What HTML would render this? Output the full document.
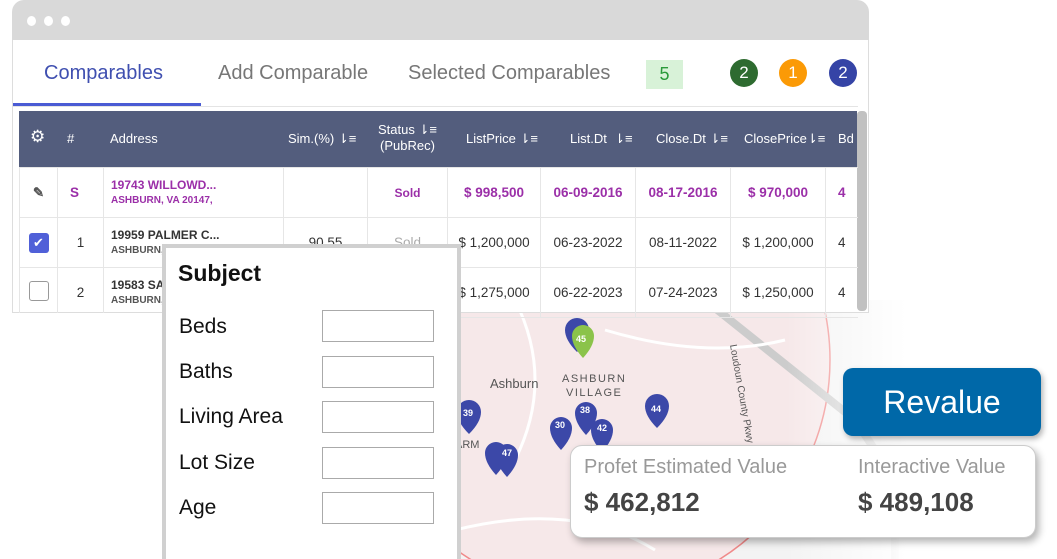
<!DOCTYPE html><html><head><style>
*{margin:0;padding:0;box-sizing:border-box}
body{width:1057px;height:559px;overflow:hidden;background:#fff;font-family:"Liberation Sans",sans-serif;position:relative}
.abs{position:absolute}
.top{left:12px;top:0;width:857px;height:42px;background:#d9d9d9;border-radius:12px 12px 0 0}
.dot{width:9px;height:10px;border-radius:50%;background:#fff;top:16px}
.win{left:12px;top:40px;width:857px;height:273px;background:#fff;border:1px solid #ddd;border-top:none}
.tab{top:62px;font-size:20px;color:#777}
.hdr{left:19px;top:111px;width:838px;height:56px;background:#535d7d}
.hd{color:#fff;font-size:13px;top:131px}
table{position:absolute;left:19px;top:167px;border-collapse:collapse;font-size:13.5px;color:#333}
td{border:1px solid #e6e6e6;height:50px;text-align:center;padding:0}
.p td{color:#9b2fa8;font-weight:bold}
.ad{text-align:left;padding-left:7px;font-weight:bold;font-size:12px;line-height:16px}
.ad small{display:block;font-size:10px;font-weight:bold;color:#555}
.p .ad small{color:#9b2fa8}
.circ{width:28px;height:28px;border-radius:50%;color:#fff;font-size:17px;text-align:center;line-height:28px;top:59px}
.lbl{font-size:21px;color:#111;left:179px}
.inp{left:322px;width:112px;height:32px;border:1px solid #aaa;background:#fff}
</style></head><body>
<svg class="abs" style="left:455px;top:300px" width="602" height="259">
<defs><linearGradient id="f" x1="0" x2="1"><stop offset="0.55" stop-color="#fff" stop-opacity="0"/><stop offset="0.75" stop-color="#fff" stop-opacity="1"/></linearGradient></defs>
<rect x="0" y="0" width="602" height="259" fill="#f3f3f3"/>
<circle cx="140" cy="60" r="235" fill="#f6e8e9" stroke="#f08a8a" stroke-width="1.5"/>
<path d="M250 0 L400 120 L440 180 L440 259" stroke="#ccc" stroke-width="8" fill="none"/>
<path d="M0 230 Q120 200 200 250 M60 0 Q100 80 60 160 M150 30 Q250 60 330 40" stroke="#fff" stroke-width="3" fill="none"/>
<rect x="0" y="0" width="602" height="259" fill="url(#f)"/>
<text x="35" y="88" font-size="13" fill="#555" font-family="Liberation Sans">Ashburn</text>
<text x="107" y="82" font-size="11" fill="#555" letter-spacing="1.5" font-family="Liberation Sans">ASHBURN</text>
<text x="111" y="96" font-size="11" fill="#555" letter-spacing="1.5" font-family="Liberation Sans">VILLAGE</text>
<text x="0" y="148" font-size="11" fill="#555" font-family="Liberation Sans">ARM</text>
<text x="275" y="45" font-size="10" fill="#555" transform="rotate(80 275 45)" font-family="Liberation Sans">Loudoun County Pkwy</text>
<g fill="#3c48a8" font-family="Liberation Sans" font-size="9" font-weight="bold">
<path d="M110 30 a12 12 0 1 1 24 0 q0 10 -12 22 q-12 -12 -12 -22z"/>
<path d="M117 36 a11 11 0 1 1 22 0 q0 10 -11 22 q-11 -12 -11 -22z" fill="#8bc34a"/>
<text x="121" y="42" fill="#fff">45</text>
<path d="M2 112 a12 12 0 1 1 24 0 q0 10 -12 22 q-12 -12 -12 -22z"/>
<text x="8" y="116" fill="#fff">39</text>
<path d="M95 128 a11 11 0 1 1 22 0 q0 10 -11 22 q-11 -12 -11 -22z"/><text x="100" y="128" fill="#fff">30</text>
<path d="M120 113 a11 11 0 1 1 22 0 q0 10 -11 22 q-11 -12 -11 -22z"/><text x="125" y="113" fill="#fff">38</text>
<path d="M136 130 a11 11 0 1 1 22 0 q0 10 -11 22 q-11 -12 -11 -22z"/><text x="142" y="131" fill="#fff">42</text>
<path d="M190 106 a12 12 0 1 1 24 0 q0 10 -12 22 q-12 -12 -12 -22z"/><text x="196" y="112" fill="#fff">44</text>
<path d="M30 153 a11 11 0 1 1 22 0 q0 10 -11 22 q-11 -12 -11 -22z"/>
<path d="M41 155 a11 11 0 1 1 22 0 q0 10 -11 22 q-11 -12 -11 -22z"/><text x="47" y="156" fill="#fff">47</text>
</g></svg>
<div class="abs top"></div>
<div class="abs dot" style="left:27px"></div><div class="abs dot" style="left:44px"></div><div class="abs dot" style="left:61px"></div>
<div class="abs win"></div>
<div class="abs tab" style="left:44px;color:#3f4fb0">Comparables</div>
<div class="abs" style="left:13px;top:103px;width:188px;height:3px;background:#4a5bd4"></div>
<div class="abs" style="left:13px;top:106px;width:845px;height:1px;background:#e4e4e4"></div>
<div class="abs tab" style="left:218px">Add Comparable</div>
<div class="abs tab" style="left:408px">Selected Comparables</div>
<div class="abs" style="left:646px;top:60px;width:37px;height:29px;background:#d8f2d8;color:#2a9a3a;font-size:18px;text-align:center;line-height:29px">5</div>
<div class="abs circ" style="left:730px;background:#2e6b30">2</div>
<div class="abs circ" style="left:779px;background:#fb9a06">1</div>
<div class="abs circ" style="left:829px;background:#3544a6">2</div>
<div class="abs hdr"></div>
<div class="abs" style="left:857px;top:111px;width:10px;height:200px;background:#c1c1c1;border-radius:4px"></div>
<div class="abs hd" style="left:30px;font-size:17px;top:127px">⚙</div>
<div class="abs hd" style="left:67px">#</div>
<div class="abs hd" style="left:110px">Address</div>
<div class="abs hd" style="left:288px">Sim.(%) ⇂≡</div>
<div class="abs hd" style="left:378px;top:122px;text-align:center;line-height:16px">Status ⇂≡<br>(PubRec)</div>
<div class="abs hd" style="left:466px">ListPrice ⇂≡</div>
<div class="abs hd" style="left:570px">List.Dt &nbsp;⇂≡</div>
<div class="abs hd" style="left:656px">Close.Dt ⇂≡</div>
<div class="abs hd" style="left:744px">ClosePrice⇂≡</div>
<div class="abs hd" style="left:838px">Bd</div>
<table>
<tr class="p"><td style="width:38px;color:#555">✎</td><td style="width:46px;text-align:left;padding-left:12px">S</td><td class="ad" style="width:180px">19743 WILLOWD...<small>ASHBURN, VA 20147,</small></td><td style="width:84px"></td><td style="width:80px;font-size:12px">Sold</td><td style="width:93px">$ 998,500</td><td style="width:95px">06-09-2016</td><td style="width:95px">08-17-2016</td><td style="width:95px">$ 970,000</td><td style="width:32px;border-right:none">4</td></tr>
<tr><td><span style="display:inline-block;width:20px;height:20px;background:#5060d8;border-radius:3px;color:#fff;font-size:13px;line-height:20px">✔</span></td><td>1</td><td class="ad">19959 PALMER C...<small>ASHBURN,</small></td><td>90.55</td><td style="color:#aaa">Sold</td><td>$ 1,200,000</td><td>06-23-2022</td><td>08-11-2022</td><td>$ 1,200,000</td><td style="border-right:none">4</td></tr>
<tr><td><span style="display:inline-block;width:20px;height:20px;border:1.5px solid #999;border-radius:3px"></span></td><td>2</td><td class="ad">19583 SA<small>ASHBURN,</small></td><td></td><td></td><td>$ 1,275,000</td><td>06-22-2023</td><td>07-24-2023</td><td>$ 1,250,000</td><td style="border-right:none">4</td></tr>
</table>
<div class="abs" style="left:0;top:313px;width:455px;height:10px;background:#fff"></div>
<div class="abs" style="left:162px;top:244px;width:299px;height:315px;background:#fff;border:4px solid #d0d0d0;border-bottom:none"></div>
<div class="abs" style="left:178px;top:260px;font-size:23px;font-weight:bold;color:#111">Subject</div>
<div class="abs lbl" style="top:315px">Beds</div><div class="abs inp" style="top:310px"></div>
<div class="abs lbl" style="top:360px">Baths</div><div class="abs inp" style="top:356px"></div>
<div class="abs lbl" style="top:405px">Living Area</div><div class="abs inp" style="top:401px"></div>
<div class="abs lbl" style="top:451px">Lot Size</div><div class="abs inp" style="top:447px"></div>
<div class="abs lbl" style="top:496px">Age</div><div class="abs inp" style="top:492px"></div>
<div class="abs" style="left:843px;top:368px;width:198px;height:68px;background:#0068a8;border-radius:10px;color:#fff;font-size:32px;text-align:center;line-height:68px;box-shadow:2px 3px 6px rgba(0,0,0,.3)">Revalue</div>
<div class="abs" style="left:570px;top:445px;width:466px;height:93px;background:#fff;border:1.5px solid #ccc;border-radius:12px;box-shadow:3px 4px 8px rgba(0,0,0,.3)"></div>
<div class="abs" style="left:584px;top:456px;font-size:20px;color:#999">Profet Estimated Value</div>
<div class="abs" style="left:858px;top:456px;font-size:20px;color:#999">Interactive Value</div>
<div class="abs" style="left:584px;top:487px;font-size:26px;font-weight:bold;color:#444">$ 462,812</div>
<div class="abs" style="left:858px;top:487px;font-size:26px;font-weight:bold;color:#444">$ 489,108</div>
</body></html>
